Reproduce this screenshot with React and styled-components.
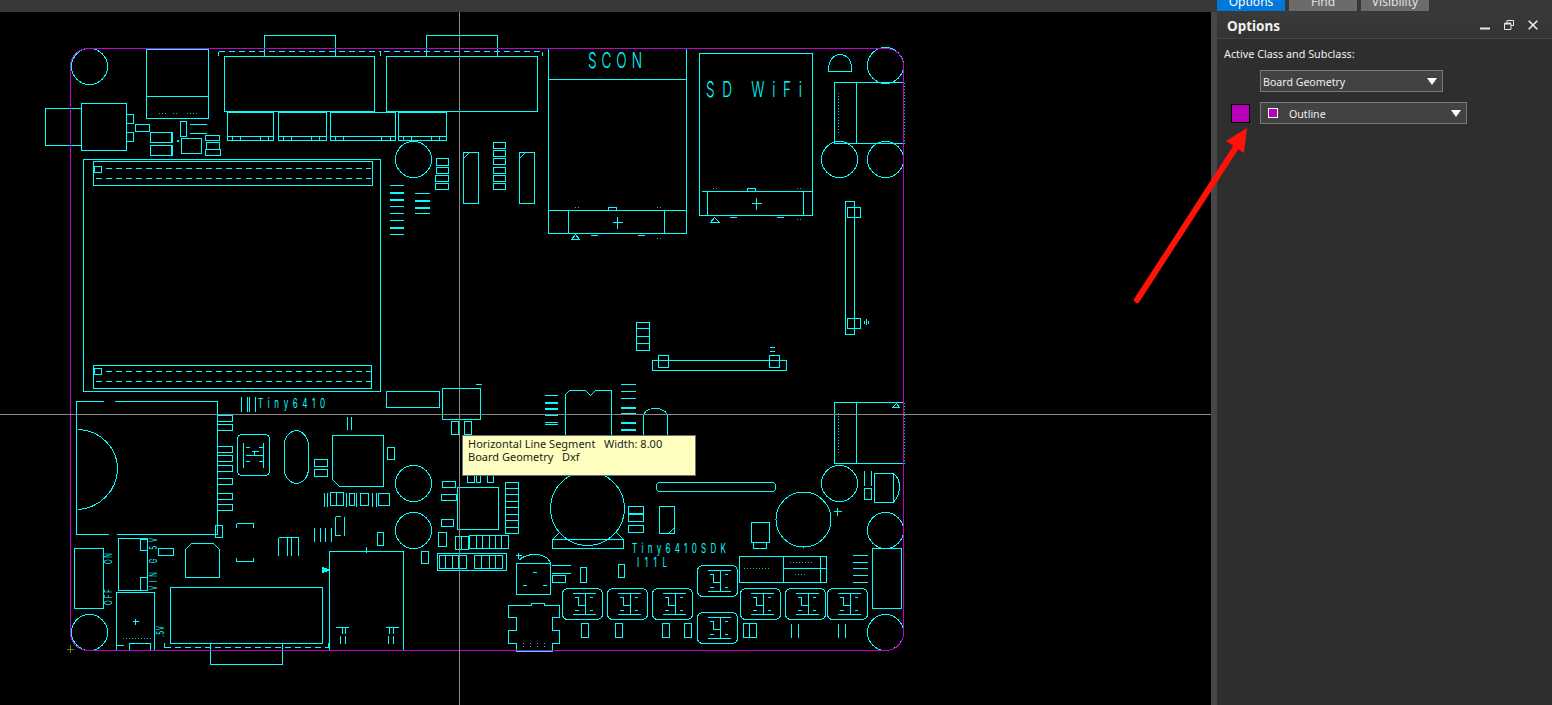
import React from 'react'
import styled, { createGlobalStyle } from 'styled-components'

const GlobalStyle = createGlobalStyle`
  html, body {
    margin: 0;
    height: 100%;
    overflow: hidden;
    background: #000;
    font-family: "Noto Sans", "Liberation Sans", sans-serif;
  }
`

const Shell = styled.div`
  position: relative;
  width: 1552px;
  height: 705px;
  display: flex;
  flex-direction: column;
  overflow: hidden;
`

const TopBar = styled.div`
  height: 12px;
  flex: none;
  display: flex;
  justify-content: flex-end;
  gap: 4px;
  padding-right: 123px;
  background: #383838;
`

const Tab = styled.div`
  width: 68px;
  height: 11px;
  overflow: hidden;
  text-align: center;
  font-size: 12px;
  line-height: 3px;
  color: ${props => props.active ? '#fff' : '#e2e2e2'};
  background: ${props => props.active ? '#0078d7' : '#6b6b6b'};
`

const Main = styled.div`
  flex: 1;
  display: flex;
  min-height: 0;
`

const Canvas = styled.div`
  position: relative;
  width: 1211px;
  flex: none;
  background: #000;
  svg { display: block; }
`

const Gutter = styled.div`
  width: 6px;
  flex: none;
  background: #474747;
`

const Panel = styled.div`
  flex: 1;
  background: #2e2e2e;
  color: #f0f0f0;
`

const TitleBar = styled.div`
  box-sizing: border-box;
  height: 27px;
  display: flex;
  align-items: center;
  justify-content: space-between;
  padding: 1px 14px 0 10px;
  background: linear-gradient(#3a3a3a, #333);
  border-bottom: 1px solid #454545;
`

const Title = styled.span`
  font-size: 13.5px;
  font-weight: 700;
`

const WindowButtons = styled.div`
  display: flex;
  gap: 14px;
  margin-top: -1px;
  svg { display: block; }
`

const Body = styled.div`
  padding: 8px 0 0 7px;
  display: flex;
  flex-direction: column;
`

const Label = styled.div`
  font-size: 10.8px;
  line-height: 14px;
  margin-bottom: 9px;
`

const Row = styled.div`
  display: flex;
  align-items: center;
  gap: 10px;
  margin-bottom: 10px;
  padding-left: ${props => props.$indent}px;
`

const Swatch = styled.div`
  width: 17px;
  height: 17px;
  background: #b800b8;
  border: 1px solid #000;
`

const Select = styled.div`
  box-sizing: border-box;
  width: ${props => props.$width}px;
  height: 22px;
  display: flex;
  align-items: center;
  padding: 0 5px 0 2px;
  background: #424242;
  border: 1px solid #787878;
  font-size: 10.6px;
`

const SelectText = styled.span`
  flex: 1;
  padding-top: 1px;
`

const MiniSwatch = styled.span`
  box-sizing: border-box;
  width: 10px;
  height: 10px;
  margin: 0 11px 0 5px;
  background: #b800b8;
  border: 1px solid #fff;
`

const Caret = styled.span`
  width: 0;
  height: 0;
  border-left: 5.5px solid transparent;
  border-right: 5.5px solid transparent;
  border-top: 7px solid #fff;
`

const Tooltip = styled.div`
  position: absolute;
  left: 462px;
  top: 423px;
  box-sizing: border-box;
  width: 234px;
  height: 41px;
  padding: 1px 5px;
  background: #ffffc0;
  border: 1px solid #6e6e6e;
  color: #1c1c1c;
  font-family: "Noto Sans", sans-serif;
  font-size: 11px;
  line-height: 13px;
  white-space: pre;
`

const ArrowLayer = styled.svg`
  position: absolute;
  left: 1130px;
  top: 120px;
  pointer-events: none;
`

const SilkText = styled.text`
  fill: #00ffff;
  font-family: "Inter", "Liberation Sans", sans-serif;
  font-size: ${props => props.$size}px;
  font-weight: ${props => props.$size > 15 ? 300 : 400};
`

const rects = [
  // top connectors
  [146, 49, 208, 118], [224, 56, 374, 111], [264, 35, 335, 56], [386, 56, 537, 111], [426, 35, 497, 56],
  [227, 112, 273, 140], [278, 112, 326, 140], [330, 112, 395, 140], [398, 112, 446, 140],
  // jack and small parts
  [45, 108, 81, 145], [81, 103, 126, 150], [126, 114, 133, 123], [126, 132, 133, 141], [135, 124, 149, 131],
  [150, 132, 172, 142], [150, 145, 172, 155], [180, 121, 186, 136], [181, 138, 201, 153],
  [205, 135, 219, 140], [206, 142, 219, 149], [205, 149, 220, 155],
  // core module
  [83, 159, 380, 391], [93, 161, 372, 185], [94, 166, 101, 172], [93, 365, 371, 388], [94, 368, 101, 374],
  [436, 158, 448, 165], [436, 167, 448, 173], [435, 175, 448, 181], [435, 183, 448, 189], [463, 152, 478, 203],
  [493, 142, 505, 148], [493, 150, 505, 156], [493, 158, 505, 164], [493, 167, 505, 173], [493, 175, 505, 181], [493, 183, 505, 189],
  [519, 152, 534, 203],
  // scon / sd wifi
  [548, 48, 686, 233], [608, 207, 616, 210], [699, 53, 812, 215], [747, 188, 755, 191],
  [834, 82, 903, 143], [845, 201, 854, 334], [847, 207, 860, 217], [847, 318, 860, 328],
  [636, 322, 649, 350], [652, 360, 786, 370], [658, 355, 668, 367], [769, 355, 779, 367],
  // lower left
  [386, 391, 439, 407], [442, 388, 480, 419], [451, 421, 458, 434], [464, 421, 471, 434],
  [217, 415, 232, 421], [217, 424, 232, 430], [217, 446, 232, 452], [217, 455, 232, 461], [217, 465, 232, 471],
  [217, 478, 232, 484], [217, 493, 232, 499], [217, 504, 232, 510], [215, 525, 222, 537],
  [314, 459, 327, 466], [314, 469, 327, 476], [387, 447, 394, 459], [377, 532, 383, 545],
  [329, 551, 403, 650], [170, 587, 322, 643], [210, 643, 282, 664], [118, 538, 147, 590], [140, 539, 147, 550], [140, 577, 147, 590],
  [158, 548, 173, 555], [74, 548, 103, 608], [116, 592, 154, 650], [129, 643, 150, 650],
  [330, 492, 343, 505], [336, 492, 343, 505], [349, 493, 354, 505], [360, 493, 368, 505], [378, 493, 389, 505],
  // center
  [457, 487, 498, 529], [442, 481, 455, 487], [441, 494, 456, 500], [441, 519, 453, 526],
  [505, 482, 518, 533], [438, 532, 446, 546], [455, 536, 461, 549], [461, 536, 468, 549],
  [469, 535, 508, 548], [437, 553, 506, 570], [439, 555, 466, 568], [474, 555, 502, 568], [421, 551, 428, 563],
  [467, 475, 474, 482], [476, 475, 480, 482], [487, 475, 493, 482],
  // lower right
  [834, 402, 903, 463], [552, 539, 623, 548], [628, 506, 643, 513], [628, 514, 643, 521], [628, 525, 643, 532], [659, 506, 674, 533],
  [864, 488, 871, 499], [874, 473, 893, 502], [872, 548, 901, 608],
  [739, 556, 826, 582], [751, 522, 769, 542], [753, 542, 766, 548], [516, 563, 550, 594],
  [552, 575, 565, 582], [580, 567, 586, 582], [618, 564, 624, 577],
  [581, 623, 588, 637], [615, 623, 622, 637], [662, 623, 669, 637], [684, 623, 691, 637], [743, 623, 749, 637], [749, 623, 756, 637],
]

const lines = [
  [146, 96, 208, 96], [548, 79, 686, 79], [548, 210, 686, 210], [568, 210, 568, 233], [664, 210, 664, 233],
  [701, 191, 812, 191], [707, 191, 707, 215], [803, 191, 803, 215], [856, 82, 856, 143], [856, 402, 856, 463],
  [612, 222, 622, 222], [617, 216, 617, 228], [751, 203, 761, 203], [756, 197, 756, 209],
  [590, 235, 597, 235], [637, 235, 644, 235], [729, 217, 736, 217], [776, 217, 783, 217],
  [189, 124, 206, 124], [189, 133, 206, 133],
  // dashed ends
  [218, 51, 218, 55], [380, 51, 380, 55], [542, 51, 542, 55], [164, 642, 164, 647], [328, 642, 328, 647],
  // connector bottoms
  [227, 136, 273, 136], [232, 136, 232, 140], [240, 136, 240, 140], [260, 136, 260, 140], [268, 136, 268, 140],
  [278, 136, 326, 136], [283, 136, 283, 140], [291, 136, 291, 140], [311, 136, 311, 140], [319, 136, 319, 140],
  [330, 136, 395, 136], [335, 136, 335, 140], [343, 136, 343, 140], [381, 136, 381, 140], [390, 136, 390, 140],
  [398, 136, 446, 136], [403, 136, 403, 140], [411, 136, 411, 140], [431, 136, 431, 140], [439, 136, 439, 140],
  // thin pin stacks
  [389, 185, 403, 185], [389, 206, 403, 206], [389, 213, 403, 213], [389, 220, 403, 220], [389, 234, 403, 234],
  [414, 193, 429, 193], [414, 213, 429, 213],
  [544, 395, 557, 395], [544, 415, 557, 415], [544, 422, 557, 422], [544, 424, 557, 424],
  [620, 384, 635, 384], [620, 391, 635, 391], [620, 398, 635, 398],
  [852, 555, 867, 555], [852, 562, 867, 562], [852, 568, 867, 568], [852, 575, 867, 575], [852, 582, 867, 582],
  // stack dividers
  [636, 328, 649, 328], [636, 336, 649, 336], [636, 343, 649, 343],
  [505, 488, 518, 488], [505, 494, 518, 494], [505, 501, 518, 501], [505, 507, 518, 507], [505, 514, 518, 514], [505, 520, 518, 520], [505, 527, 518, 527],
  [476, 535, 476, 548], [482, 535, 482, 548], [489, 535, 489, 548], [495, 535, 495, 548], [501, 535, 501, 548],
  [445, 555, 445, 568], [452, 555, 452, 568], [458, 555, 458, 568], [481, 555, 481, 568], [489, 555, 489, 568], [495, 555, 495, 568],
  // slots and brackets
  [324, 492, 324, 506], [327, 492, 327, 506], [346, 492, 346, 506], [356, 492, 356, 506], [372, 492, 372, 506], [376, 492, 376, 506],
  [236, 523, 253, 523], [236, 561, 253, 561], [236, 523, 236, 527], [253, 523, 253, 527], [236, 557, 236, 561], [253, 557, 253, 561],
  [335, 516, 335, 535], [344, 516, 344, 535], [335, 516, 340, 516], [335, 535, 340, 535],
  [314, 527, 314, 541], [320, 527, 320, 541], [325, 527, 325, 541], [331, 527, 331, 541],
  [278, 537, 278, 555], [287, 537, 287, 555], [291, 537, 291, 555], [298, 537, 298, 555], [278, 537, 291, 537], [291, 537, 298, 537],
  [347, 416, 347, 429], [351, 416, 351, 429], [241, 396, 241, 411], [247, 396, 247, 411], [249, 396, 249, 411], [255, 396, 255, 411],
  [864, 470, 864, 485], [871, 470, 871, 485], [791, 623, 791, 637], [798, 623, 798, 637], [838, 623, 838, 637], [845, 623, 845, 637],
  // power block
  [783, 556, 783, 582], [783, 568, 826, 568], [820, 556, 820, 582], [551, 565, 570, 565], [551, 573, 570, 573],
  [522, 585, 526, 585], [542, 585, 546, 585], [532, 572, 536, 572],
  [116, 645, 123, 645], [135, 618, 135, 624], [132, 621, 138, 621],
  [837, 507, 837, 515], [833, 511, 841, 511], [366, 546, 366, 552], [518, 552, 518, 558], [515, 555, 521, 555],
  [475, 384, 481, 384], [866, 318, 866, 324], [864, 320, 864, 323], [868, 320, 868, 323],
  [769, 347, 774, 347], [769, 351, 774, 351],
  // sockets in big connector
  [335, 627, 348, 627], [342, 627, 342, 633], [345, 627, 345, 633], [340, 635, 340, 643], [345, 635, 345, 643],
  [385, 627, 398, 627], [389, 627, 389, 633], [393, 627, 393, 633], [388, 635, 388, 643], [393, 635, 393, 643],
  // crystal symbol
  [243, 442, 243, 467], [263, 442, 263, 467], [245, 447, 249, 447], [258, 447, 262, 447], [245, 455, 262, 455],
  [251, 451, 258, 451], [254, 451, 254, 455], [245, 461, 249, 461], [258, 461, 262, 461],
]

const thick = [
  [171, 132, 171, 142], [171, 145, 171, 155], [389, 192, 403, 192], [389, 199, 403, 199], [389, 227, 403, 227],
  [414, 200, 429, 200], [414, 207, 429, 207], [544, 402, 557, 402], [544, 408, 557, 408],
  [620, 407, 635, 407], [620, 413, 635, 413], [620, 422, 635, 422], [620, 429, 635, 429],
  [177, 139, 177, 141],
]

const circles = [
  [89, 66, 18], [413, 159, 18], [885, 65, 18], [839, 159, 18], [885, 159, 18],
  [413, 483, 18], [413, 530, 18], [89, 632, 18], [587, 508, 37], [803, 519, 27.5], [839, 483, 18], [885, 530, 18], [885, 632, 18],
]

const curves = [
  'M828.5 71.5 V67 C830 60 834 54.5 840 54.5 C846 54.5 851 59 851.5 67 V71.5 Z',
  'M78.5 429.5 C100 430 117.5 448 117.5 468.5 C117.5 490 100 508 78.5 509.5',
  'M103.5 401.5 H76.5 V534.5 H108.5 M114.5 401.5 H217.5 V534.5 H116.5',
  'M242.5 434.5 H264.5 Q269.5 434.5 269.5 439.5 V470.5 Q269.5 475.5 264.5 475.5 H242.5 Q237.5 475.5 237.5 470.5 V439.5 Q237.5 434.5 242.5 434.5 Z',
  'M296.5 430.5 C303 431 308 438 308.5 444 V470 C308 477 303 483 296.5 483.5 C290 483 284.5 477 284.5 470 V444 C284.5 437 290 431 296.5 430.5 Z',
  'M332.5 435.5 H383.5 V486.5 H339.5 L332.5 479.5 Z',
  'M191.5 543.5 H213.5 L219.5 549.5 V577.5 H185.5 V549.5 Z',
  'M569.5 390.5 H585.5 L590.5 395.5 L595.5 390.5 H611.5 V435.5 M565.5 435.5 V394.5 L569.5 390.5',
  'M643.5 435.5 V417 C643.5 411 649 408.5 655 408.5 C661 408.5 667.5 411 667.5 417 V435.5',
  'M660.5 482.5 H771.5 C775 482.5 775.5 484 775.5 487 C775.5 490 775 491.5 771.5 491.5 H660.5 C657 491.5 656.5 490 656.5 487 C656.5 484 657 482.5 660.5 482.5 Z',
  'M552.5 539.5 L559.5 532.5 M623.5 539.5 L616.5 532.5',
  'M893.5 473.5 C898 477 899.5 483 899.5 487 C899.5 492 897 498 893.5 502.5',
  'M518.5 560.5 C524 555 530 554.5 535 554.5 C543 554.5 549 558 550.5 563.5',
  'M571.5 239.5 L575.5 234.5 L579.5 239.5 Z M710.5 222.5 L714.5 217.5 L719.5 222.5 Z M892.5 407.5 L896.5 403.5 L899.5 407.5 Z',
  'M508.5 605.5 H531.5 V603.5 H544.5 V605.5 H559.5 V617.5 H552.5 V630.5 H559.5 V643.5 H552.5 V651.5 H516.5 V643.5 H508.5 V630.5 H516.5 V617.5 H508.5 Z',
  'M463.5 158.5 L468.5 153.5 M519.5 158.5 L524.5 153.5 M669 533 L674 528',
]

const dashed = [
  [218, 51, 380, 51], [383, 51, 542, 51], [105, 168, 370, 168], [95, 178, 370, 178],
  [105, 371, 370, 371], [95, 381, 370, 381], [164, 647, 328, 647],
]

const dotted = [
  [122, 638, 152, 638], [158, 113, 165, 113], [172, 113, 178, 113], [186, 113, 198, 113], [743, 568, 768, 568], [789, 562, 812, 562], [794, 574, 804, 574],
  [838, 92, 838, 132], [838, 412, 838, 452], [523, 642, 523, 648], [530, 642, 530, 648], [537, 642, 537, 648], [544, 642, 544, 648],
  [904, 82, 904, 143], [904, 402, 904, 463],
  [574, 207, 578, 207], [656, 207, 660, 207], [656, 238, 660, 238], [712, 188, 716, 188], [796, 188, 800, 188], [796, 219, 800, 219],
]

// buttons with a switch symbol inside
const buttons = [
  [562, 588], [607, 588], [652, 588], [697, 565], [697, 612], [740, 588], [785, 588], [827, 588],
]

const toPath = list => list.map(([x1, y1, x2, y2]) => `M${x1 + 0.5} ${y1 + 0.5}L${x2 + 0.5} ${y2 + 0.5}`).join('')
const rectPath = list => list.map(([x1, y1, x2, y2]) => `M${x1 + 0.5} ${y1 + 0.5}H${x2 + 0.5}V${y2 + 0.5}H${x1 + 0.5}Z`).join('')

const switchSymbol = (x, y) => [
  [x + 10, y + 5, x + 33, y + 5], [x + 10, y + 26, x + 33, y + 26], [x + 16, y + 9, x + 16, y + 17], [x + 23, y + 5, x + 23, y + 26],
  [x + 16, y + 17, x + 23, y + 17], [x + 12, y + 9, x + 16, y + 9], [x + 27, y + 9, x + 30, y + 9], [x + 12, y + 22, x + 16, y + 22], [x + 27, y + 22, x + 30, y + 22],
]

const buttonPath = buttons.map(([x, y]) =>
  `M${x + 6.5} ${y + 0.5}H${x + 34.5}Q${x + 40.5} ${y + 0.5} ${x + 40.5} ${y + 6.5}V${y + 25.5}Q${x + 40.5} ${y + 31.5} ${x + 34.5} ${y + 31.5}H${x + 6.5}Q${x + 0.5} ${y + 31.5} ${x + 0.5} ${y + 25.5}V${y + 6.5}Q${x + 0.5} ${y + 0.5} ${x + 6.5} ${y + 0.5}Z` + toPath(switchSymbol(x, y))
).join('')

// silkscreen lettering: narrow glyphs spread out over a fixed width
function Silk({ x, y, size, width, squeeze = 0.62, turn = 0, children }) {
  return (
    <SilkText
      $size={size}
      transform={`translate(${x} ${y}) rotate(${turn}) scale(${squeeze} 1)`}
      textLength={width / squeeze}
    >
      {children}
    </SilkText>
  )
}

function BoardDrawing() {
  const cyan = '#00ffff'
  return (
    <svg width="1211" height="693" viewBox="0 12 1211 693" shapeRendering="crispEdges" fill="none">
      <g stroke={cyan} strokeWidth="1">
        <path d={rectPath(rects)} />
        <path d={toPath(lines)} />
        <path d={curves.join('')} />
        <path d={buttonPath} />
        {circles.map(([cx, cy, r]) => <circle key={`${cx}-${cy}`} cx={cx + 0.5} cy={cy + 0.5} r={r} />)}
        <path d={toPath(dashed)} strokeDasharray="6 4" />
        <path d={toPath(dotted)} strokeDasharray="1 2" opacity="0.8" />
        <path d={toPath(thick)} strokeWidth="2" />
        <path d="M322 567L329 570L322 573Z" fill={cyan} />
      </g>
      <path d="M88.5 48.5H885.5C896 48.5 903.5 56 903.5 66V632C903.5 643 896 650.5 885.5 650.5H88.5C78 650.5 70.5 643 70.5 632V66C70.5 56 78 48.5 88.5 48.5Z" stroke="#c400cc" />
      <path d="M70.5 645V653M67 649.5H74" stroke="#6f7f20" />
      <path d="M459.5 12V705M0 414.5H1211" stroke="#8a8a8a" />

      <Silk x={588} y={68} size={22} width={54}>SCON</Silk>
      <Silk x={706} y={97} size={22} width={96}>SD WiFi</Silk>
      <Silk x={258} y={408} size={13} width={67}>Tiny6410</Silk>
      <Silk x={632} y={553} size={13} width={94}>Tiny6410SDK</Silk>
      <Silk x={637} y={567} size={13} width={30}>I11L</Silk>
      <Silk x={112} y={564} size={10} width={11} turn={-90}>ON</Silk>
      <Silk x={112} y={605} size={10} width={16} turn={-90}>OFF</Silk>
      <Silk x={157} y={590} size={10} width={52} turn={-90}>VIN G 5V</Silk>
      <Silk x={164} y={637} size={10} width={11} turn={-90}>.5V</Silk>
    </svg>
  )
}

function WindowIcons() {
  return (
    <WindowButtons>
      <svg width="10" height="10" viewBox="0 0 10 10"><path d="M0 8.5H10" stroke="#e8e8e8" strokeWidth="2" /></svg>
      <svg width="10" height="10" viewBox="0 0 10 10" fill="none" stroke="#e8e8e8"><path d="M3 2.5V.5H9.5V5.5H7" /><path d="M.5 3.5H7V9.5H.5Z" strokeWidth="1" /><path d="M.5 3.5H7" strokeWidth="2" /></svg>
      <svg width="10" height="10" viewBox="0 0 10 10"><path d="M.7 .7L9.3 9.3M9.3 .7L.7 9.3" stroke="#f0f0f0" strokeWidth="1.6" /></svg>
    </WindowButtons>
  )
}

export default function App() {
  return (
    <Shell>
      <GlobalStyle />
      <TopBar>
        <Tab active>Options</Tab>
        <Tab>Find</Tab>
        <Tab>Visibility</Tab>
      </TopBar>
      <Main>
        <Canvas>
          <BoardDrawing />
          <Tooltip>{'Horizontal Line Segment   Width: 8.00\nBoard Geometry   Dxf'}</Tooltip>
        </Canvas>
        <Gutter />
        <Panel>
          <TitleBar>
            <Title>Options</Title>
            <WindowIcons />
          </TitleBar>
          <Body>
            <Label>Active Class and Subclass:</Label>
            <Row $indent={36}>
              <Select $width={183}>
                <SelectText>Board Geometry</SelectText>
                <Caret />
              </Select>
            </Row>
            <Row $indent={7}>
              <Swatch />
              <Select $width={207}>
                <MiniSwatch />
                <SelectText>Outline</SelectText>
                <Caret />
              </Select>
            </Row>
          </Body>
        </Panel>
      </Main>
      <ArrowLayer width="125" height="190" viewBox="1130 120 125 190">
        <path d="M1137 300L1240 141" stroke="#ff1208" strokeWidth="6" strokeLinecap="round" />
        <path d="M1247 128L1226 141L1244 153Z" fill="#ff1208" />
      </ArrowLayer>
    </Shell>
  )
}
